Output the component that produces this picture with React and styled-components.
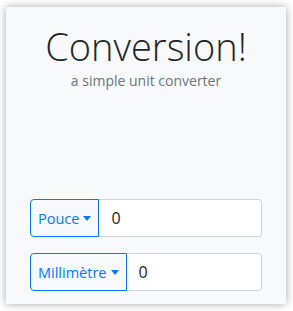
import React from 'react';
import styled, { createGlobalStyle } from 'styled-components';

const GlobalStyle = createGlobalStyle`
  html, body {
    margin: 0;
    padding: 0;
    background: #ffffff;
  }
  body {
    font-family: "Open Sans", "Noto Sans", sans-serif;
  }
`;

const Page = styled.div`
  padding: 7px 7px 7px 6px;
`;

const Card = styled.div`
  background-color: #f8f9fa;
  height: 297px;
  box-sizing: border-box;
  box-shadow: 0 0 8px rgba(0, 0, 0, 0.35);
  padding: 13px 24px 0;
  display: flex;
  flex-direction: column;
`;

const Header = styled.header`
  text-align: center;
`;

const Title = styled.h1`
  margin: 0;
  font-weight: 300;
  font-size: 38px;
  line-height: 52px;
  color: #212529;
`;

const Subtitle = styled.p`
  margin: 0;
  font-size: 14px;
  line-height: 18px;
  color: #6c757d;
`;

const Form = styled.div`
  margin-top: 109px;
  display: flex;
  flex-direction: column;
  gap: 16px;
`;

const InputGroup = styled.div`
  display: flex;
  height: 38px;
`;

const UnitButton = styled.button`
  display: flex;
  align-items: center;
  gap: 4px;
  padding: 0 7px;
  font-family: inherit;
  font-size: 14.5px;
  color: #007bff;
  background: transparent;
  border: 1px solid #007bff;
  border-radius: 4px 0 0 4px;
  cursor: pointer;
`;

const Caret = styled.span`
  width: 0;
  height: 0;
  border-left: 4px solid transparent;
  border-right: 4px solid transparent;
  border-top: 5px solid #007bff;
`;

const ValueInput = styled.input`
  flex: 1;
  min-width: 0;
  box-sizing: border-box;
  padding: 0 12px;
  font-family: inherit;
  font-size: 16px;
  color: #212529;
  background: #ffffff;
  border: 1px solid #ced4da;
  border-left: none;
  border-radius: 0 4px 4px 0;
  outline: none;
`;

const UnitRow = ({ unit, value }) => (
  <InputGroup>
    <UnitButton type="button">
      {unit}
      <Caret />
    </UnitButton>
    <ValueInput defaultValue={value} />
  </InputGroup>
);

export default function App() {
  return (
    <Page>
      <GlobalStyle />
      <Card>
        <Header>
          <Title>Conversion!</Title>
          <Subtitle>a simple unit converter</Subtitle>
        </Header>
        <Form>
          <UnitRow unit="Pouce" value="0" />
          <UnitRow unit="Millimètre" value="0" />
        </Form>
      </Card>
    </Page>
  );
}
